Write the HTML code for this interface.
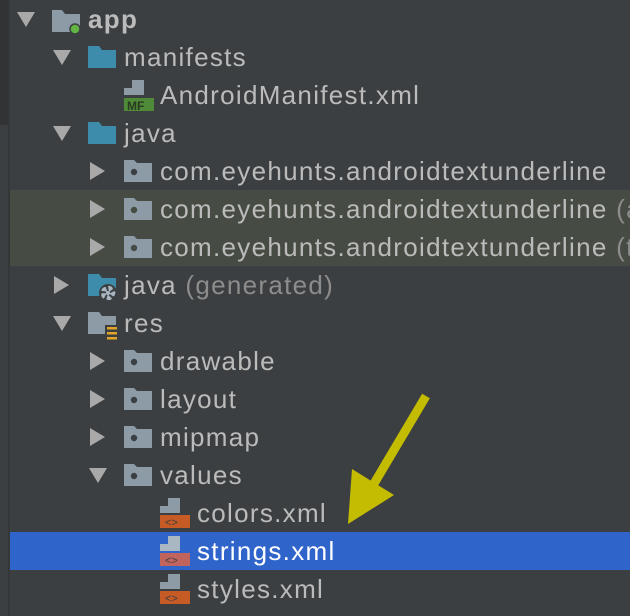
<!DOCTYPE html>
<html><head><style>
body{margin:0;width:630px;height:616px;background:#3c3f41;overflow:hidden;position:relative;font-family:"Liberation Sans",sans-serif;}
.strip{position:absolute;left:0;top:0;width:8px;height:125px;background:#313335}
.sep{position:absolute;left:8px;top:0;width:2px;height:616px;background:#353739}
.hl{position:absolute;left:10px;width:620px;height:38px}
.r{position:absolute;height:38px;line-height:38px;font-size:26px;letter-spacing:1.3px;color:#bbbbbb;white-space:nowrap}
.g{color:#8c8c8c}
.tri-d{position:absolute;width:0;height:0;border-left:9px solid transparent;border-right:9px solid transparent;border-top:15px solid #a9a9a9}
.tri-r{position:absolute;width:0;height:0;border-top:9px solid transparent;border-bottom:9px solid transparent;border-left:15px solid #a9a9a9}
svg{position:absolute}
</style></head><body>
<div class="strip"></div><div class="sep"></div>
<div class="hl" style="top:190px;height:76px;background:#464c43"></div>
<div class="hl" style="top:532px;background:#2f65ca"></div>

<div class="tri-d" style="left:17px;top:12px"></div>
<svg style="left:52px;top:8px" width="30" height="26"><path d="M0 2h10l3 4h15v18H0z" fill="#8d9ba6"/><circle cx="23" cy="21" r="5" fill="#62b543" stroke="#3c3f41" stroke-width="1.5"/></svg>
<div class="r" style="left:88px;top:0;font-weight:bold">app</div>

<div class="tri-d" style="left:53px;top:50px"></div>
<svg style="left:88px;top:45px" width="30" height="24"><path d="M0 1h11l3 4h14v18H0z" fill="#3d8cab"/></svg>
<div class="r" style="left:124px;top:38px">manifests</div>

<svg style="left:124px;top:80px" width="30" height="32"><path d="M8 0h12v15H0V8h8z" fill="#8d9ba6"/><rect x="0" y="18" width="30" height="13" fill="#4e8a37"/><text x="3" y="30" font-size="12" font-weight="bold" font-family="Liberation Sans" fill="#2a3a22">MF</text></svg>
<div class="r" style="left:160px;top:76px">AndroidManifest.xml</div>

<div class="tri-d" style="left:53px;top:126px"></div>
<svg style="left:88px;top:121px" width="30" height="24"><path d="M0 1h11l3 4h14v18H0z" fill="#3d8cab"/></svg>
<div class="r" style="left:124px;top:114px">java</div>

<div class="tri-r" style="left:90px;top:162px"></div>
<svg style="left:124px;top:160px" width="30" height="22"><path d="M0 0h10l3 3h15v19H0z" fill="#8d9ba6"/><circle cx="10" cy="12" r="3.2" fill="#3c3f41"/></svg>
<div class="r" style="left:160px;top:152px">com.eyehunts.androidtextunderline</div>
<div class="tri-r" style="left:90px;top:200px"></div>
<svg style="left:124px;top:198px" width="30" height="22"><path d="M0 0h10l3 3h15v19H0z" fill="#8d9ba6"/><circle cx="10" cy="12" r="3.2" fill="#464c43"/></svg>
<div class="r" style="left:160px;top:190px">com.eyehunts.androidtextunderline <span class="g">(a</span></div>
<div class="tri-r" style="left:90px;top:238px"></div>
<svg style="left:124px;top:236px" width="30" height="22"><path d="M0 0h10l3 3h15v19H0z" fill="#8d9ba6"/><circle cx="10" cy="12" r="3.2" fill="#464c43"/></svg>
<div class="r" style="left:160px;top:228px">com.eyehunts.androidtextunderline <span class="g">(t</span></div>

<div class="tri-r" style="left:54px;top:276px"></div>
<svg style="left:88px;top:273px" width="34" height="30"><path d="M0 1h11l3 4h14v18H0z" fill="#3d8cab"/><circle cx="20" cy="20" r="9" fill="#3c3f41"/><g fill="#a9b7c2" transform="translate(20 20)"><circle r="2"/><path d="M0-7a4 4 0 0 1 5 3L1-1z"/><path d="M0-7a4 4 0 0 1 5 3L1-1z" transform="rotate(72)"/><path d="M0-7a4 4 0 0 1 5 3L1-1z" transform="rotate(144)"/><path d="M0-7a4 4 0 0 1 5 3L1-1z" transform="rotate(216)"/><path d="M0-7a4 4 0 0 1 5 3L1-1z" transform="rotate(288)"/></g></svg>
<div class="r" style="left:124px;top:266px">java <span class="g">(generated)</span></div>

<div class="tri-d" style="left:53px;top:316px"></div>
<svg style="left:88px;top:312px" width="32" height="30"><path d="M0 0h11l3 4h14v18H0z" fill="#8d9ba6"/><rect x="17" y="13" width="14" height="16" fill="#3c3f41"/><g fill="#e0a42b"><rect x="19" y="15" width="10" height="2.5"/><rect x="19" y="20" width="10" height="2.5"/><rect x="19" y="25" width="10" height="2.5"/></g></svg>
<div class="r" style="left:124px;top:304px">res</div>

<div class="tri-r" style="left:90px;top:352px"></div>
<svg style="left:124px;top:350px" width="30" height="22"><path d="M0 0h10l3 3h15v19H0z" fill="#8d9ba6"/><circle cx="10" cy="12" r="3.2" fill="#3c3f41"/></svg>
<div class="r" style="left:160px;top:342px">drawable</div>
<div class="tri-r" style="left:90px;top:390px"></div>
<svg style="left:124px;top:388px" width="30" height="22"><path d="M0 0h10l3 3h15v19H0z" fill="#8d9ba6"/><circle cx="10" cy="12" r="3.2" fill="#3c3f41"/></svg>
<div class="r" style="left:160px;top:380px">layout</div>
<div class="tri-r" style="left:90px;top:428px"></div>
<svg style="left:124px;top:426px" width="30" height="22"><path d="M0 0h10l3 3h15v19H0z" fill="#8d9ba6"/><circle cx="10" cy="12" r="3.2" fill="#3c3f41"/></svg>
<div class="r" style="left:160px;top:418px">mipmap</div>
<div class="tri-d" style="left:89px;top:468px"></div>
<svg style="left:124px;top:464px" width="30" height="22"><path d="M0 0h10l3 3h15v19H0z" fill="#8d9ba6"/><circle cx="10" cy="12" r="3.2" fill="#3c3f41"/></svg>
<div class="r" style="left:160px;top:456px">values</div>

<svg style="left:160px;top:498px" width="30" height="32"><path d="M8 0h12v15H0V8h8z" fill="#8d9ba6"/><rect x="0" y="17" width="30" height="13" fill="#c75b26"/><text x="5" y="28" font-size="11" font-family="Liberation Sans" fill="#3c3f41">&lt;&gt;</text></svg>
<div class="r" style="left:197px;top:494px">colors.xml</div>
<svg style="left:160px;top:536px" width="30" height="32"><path d="M8 0h12v15H0V8h8z" fill="#a9b7c2"/><rect x="0" y="17" width="30" height="13" fill="#c0645d"/><text x="5" y="28" font-size="11" font-family="Liberation Sans" fill="#3c3f41">&lt;&gt;</text></svg>
<div class="r" style="left:197px;top:532px;color:#fff">strings.xml</div>
<svg style="left:160px;top:574px" width="30" height="32"><path d="M8 0h12v15H0V8h8z" fill="#8d9ba6"/><rect x="0" y="17" width="30" height="13" fill="#c75b26"/><text x="5" y="28" font-size="11" font-family="Liberation Sans" fill="#3c3f41">&lt;&gt;</text></svg>
<div class="r" style="left:197px;top:570px">styles.xml</div>

<svg style="left:0;top:0" width="630" height="616"><line x1="426" y1="396" x2="372" y2="487" stroke="#c4bc00" stroke-width="9"/><polygon points="352,469 394,495 348,524" fill="#c4bc00"/></svg>
</body></html>
